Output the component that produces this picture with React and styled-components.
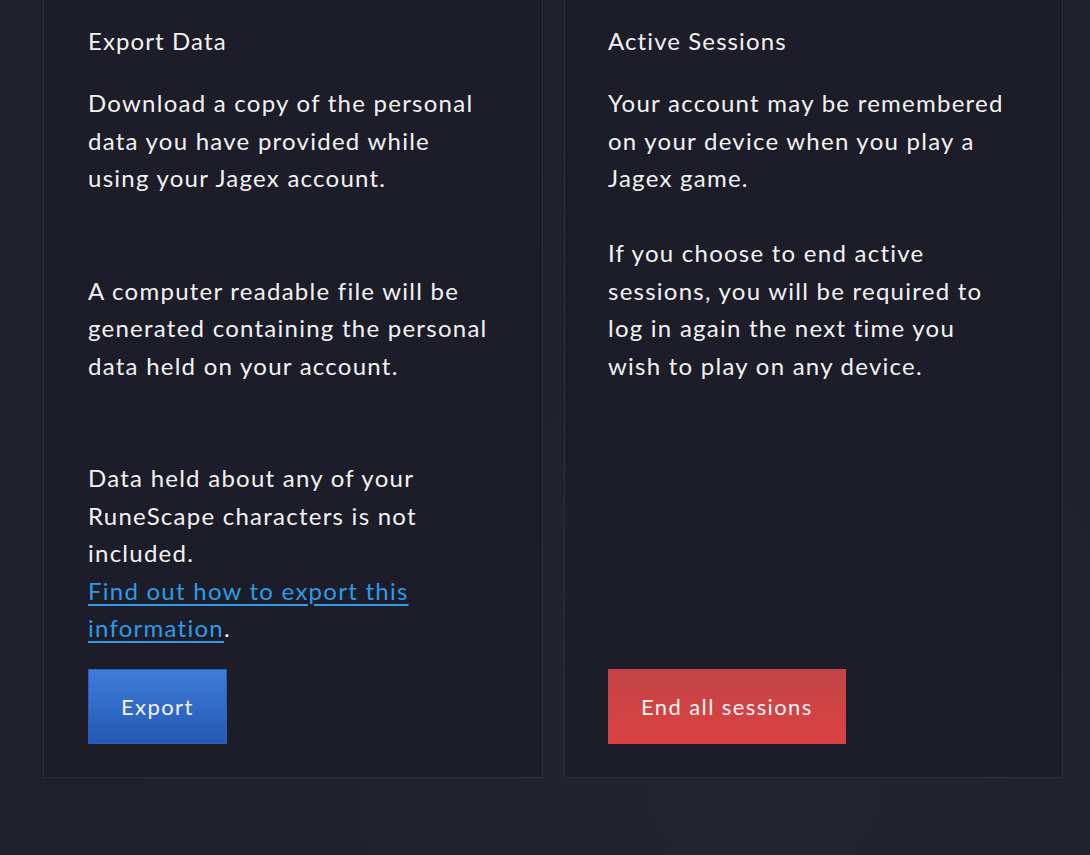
import React from "react";
import styled, { createGlobalStyle } from "styled-components";

const Global = createGlobalStyle`
  html, body {
    margin: 0;
    padding: 0;
    background: #1e202b;
  }
  body {
    font-family: Lato, "Noto Sans", sans-serif;
    color: #f2f2f2;
  }
`;

const Page = styled.div`
  width: 1090px;
  height: 855px;
  overflow: hidden;
  background: radial-gradient(ellipse at 70% 90%, #22242f 0%, #1e202b 60%);
`;

const Grid = styled.div`
  display: grid;
  grid-template-columns: 500px 499px;
  gap: 21px;
  margin: -30px 0 0 43px;
`;

const Card = styled.section`
  display: flex;
  flex-direction: column;
  align-items: flex-start;
  background: #1c1d29;
  border: 1px solid #2c2e3a;
  padding: 54px 44px 33px ${(p) => p.inset || 44}px;
`;

const Title = styled.h2`
  margin: 0 0 27px 0;
  font-size: 24px;
  font-weight: 400;
  letter-spacing: 1.1px;
  line-height: 32px;
`;

const Text = styled.p`
  margin: 0 0 ${(p) => p.gap}px 0;
  font-size: 24px;
  letter-spacing: 1.25px;
  line-height: 37.5px;
  white-space: nowrap;
`;

const Link = styled.a`
  color: #2f9ae8;
  text-decoration: underline;
  text-underline-offset: 4px;
  text-decoration-thickness: 2px;
`;

const Spacer = styled.div`
  flex: 1;
`;

const Button = styled.button`
  box-sizing: border-box;
  height: 75px;
  padding: 0 ${(p) => p.pad}px;
  border: 1px solid ${(p) => p.edge};
  background: linear-gradient(to bottom, ${(p) => p.top}, ${(p) => p.bottom});
  color: #f4f4f4;
  font-family: Lato, "Noto Sans", sans-serif;
  font-size: 22px;
  letter-spacing: 1.4px;
  cursor: pointer;
  margin-top: 22px;
`;

export default function App() {
  return (
    <Page>
      <Global />
      <Grid>
        <Card>
          <Title>Export Data</Title>
          <Text gap={75}>
            Download a copy of the personal
            <br />
            data you have provided while
            <br />
            using your Jagex account.
          </Text>
          <Text gap={75}>
            A computer readable file will be
            <br />
            generated containing the personal
            <br />
            data held on your account.
          </Text>
          <Text gap={0}>
            Data held about any of your
            <br />
            RuneScape characters is not
            <br />
            included.
            <br />
            <Link href="#">
              Find out how to export this{" "}
              <br />
              information
            </Link>
            .
          </Text>
          <Spacer />
          <Button pad={32} top="#3e7ddb" bottom="#2458b4" edge="#2a5fb8">
            Export
          </Button>
        </Card>
        <Card inset={43}>
          <Title>Active Sessions</Title>
          <Text gap={37.5}>
            Your account may be remembered
            <br />
            on your device when you play a
            <br />
            Jagex game.
          </Text>
          <Text gap={0}>
            If you choose to end active
            <br />
            sessions, you will be required to
            <br />
            log in again the next time you
            <br />
            wish to play on any device.
          </Text>
          <Spacer />
          <Button pad={32} top="#c24446" bottom="#dc4242" edge="#c84446">
            End all sessions
          </Button>
        </Card>
      </Grid>
    </Page>
  );
}
